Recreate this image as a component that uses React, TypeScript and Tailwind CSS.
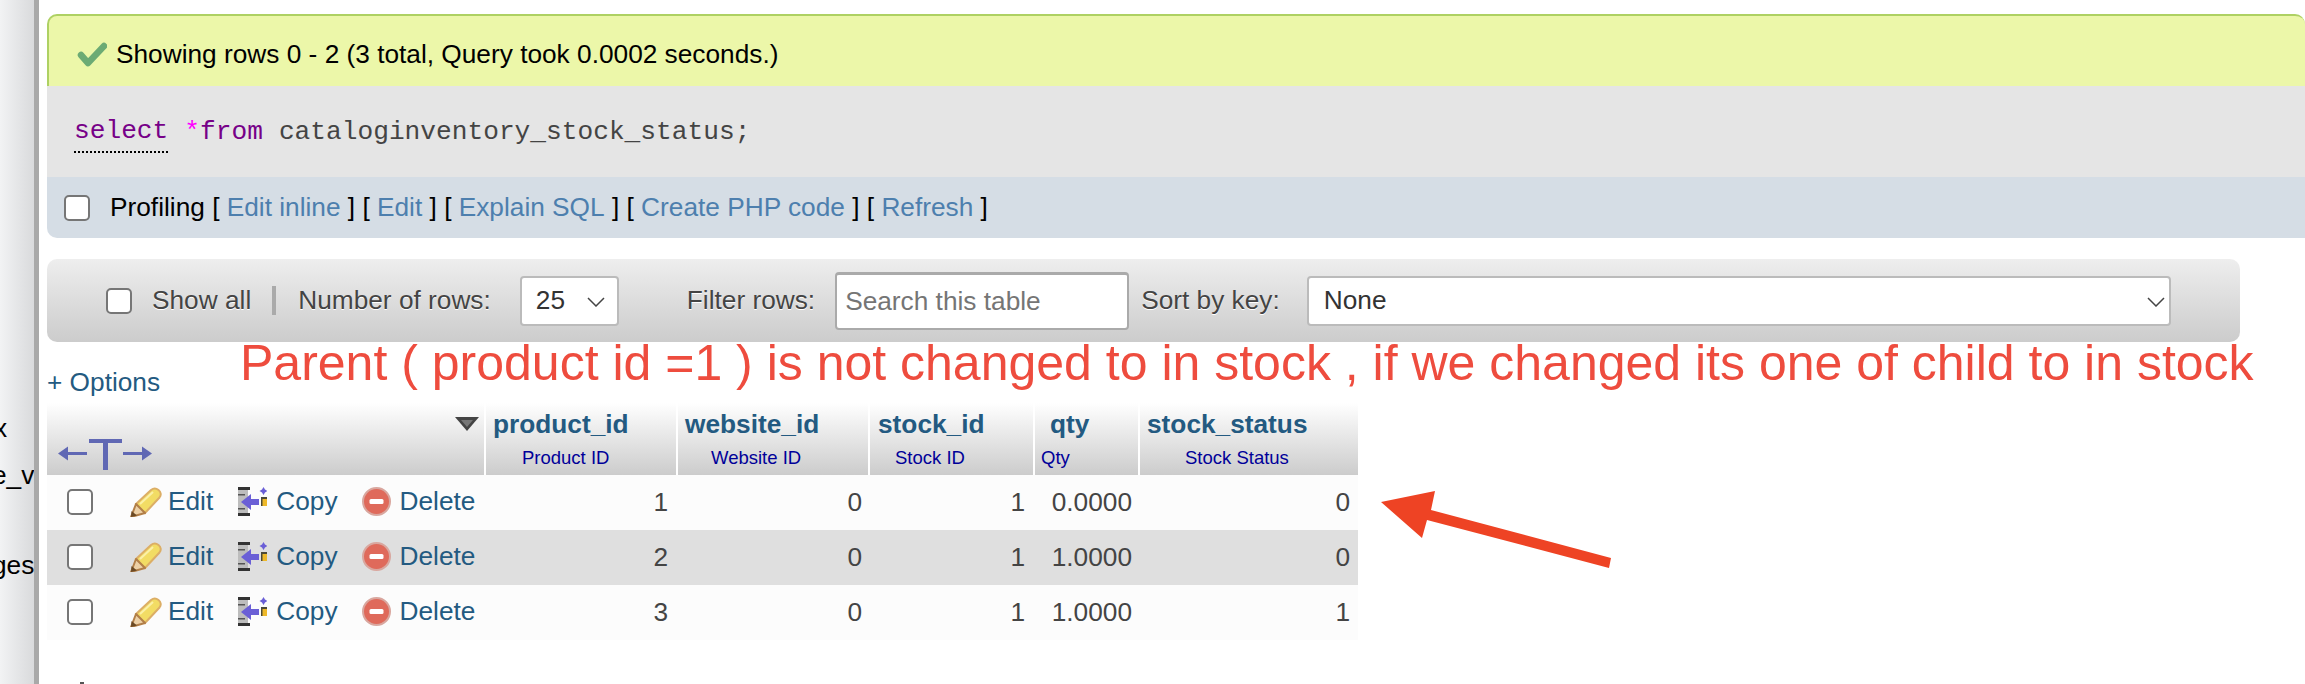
const FONT = "font-['Liberation_Sans',Arial,sans-serif]";

const COLUMNS = [
  { name: 'product_id', label: 'Product ID', width: 192, nameClass: 'pl-[7px]', labelClass: 'pl-[36px]' },
  { name: 'website_id', label: 'Website ID', width: 192, nameClass: 'pl-[7px]', labelClass: 'pl-[33px]' },
  { name: 'stock_id', label: 'Stock ID', width: 165, nameClass: 'pl-[8px]', labelClass: 'pl-[25px]' },
  { name: 'qty', label: 'Qty', width: 105, nameClass: 'pl-[15px]', labelClass: 'pl-[6px]' },
  { name: 'stock_status', label: 'Stock Status', width: 219, nameClass: 'pl-[7px]', labelClass: 'pl-[45px]' },
];

const ROWS = [
  { id: '1', site: '0', stock: '1', qty: '0.0000', status: '0' },
  { id: '2', site: '0', stock: '1', qty: '1.0000', status: '0' },
  { id: '3', site: '0', stock: '1', qty: '1.0000', status: '1' },
];

function Check({ className = '' }: { className?: string }) {
  return (
    <input
      type="checkbox"
      className={`h-[26px] w-[26px] shrink-0 appearance-none rounded-[5px] border-2 border-[#767676] bg-white ${className}`}
    />
  );
}

function Chevron({ className = '' }: { className?: string }) {
  return (
    <svg viewBox="0 0 18 10" className={`pointer-events-none absolute h-[10px] w-[18px] ${className}`}>
      <path d="M1 1l8 8 8-8" fill="none" stroke="#444" strokeWidth="1.5" />
    </svg>
  );
}

function PencilIcon() {
  return (
    <svg viewBox="0 0 32 30" className="h-[30px] w-[32px] shrink-0 blur-[0.4px]">
      <path d="M6 17L21 3c2.500-2 5-2 7.500 0s3 5 1 7.500L15 26z" fill="#f2dc64" stroke="#dcae66" strokeWidth="2" />
      <path d="M10 17L23 5" stroke="#fbf0a8" strokeWidth="2" />
      <path d="M6 17l9 9-14 4z" fill="#ecd0a6" stroke="#b27f48" strokeWidth="2" strokeLinejoin="round" />
      <path d="M1.500 24l-.5 6 6-1.500z" fill="#6b4a25" />
    </svg>
  );
}

function CopyIcon() {
  return (
    <svg viewBox="0 0 30 31" className="h-[31px] w-[30px] shrink-0 blur-[0.4px]">
      <path d="M1 1h10v29H1z" fill="#bdbdbd" />
      <path d="M1 1h12v3H1zM1 27h12v3H1z" fill="#333" />
      <path d="M1 8h7v1.500H1zM1 22h7v1.500H1z" fill="#555" />
      <path d="M4 16l10-8v5h8v6h-8v5z" fill="#6a5fd6" />
      <path d="M24 12h6v8h-6z" fill="#eeb92a" />
      <path d="M24 11h6v2h-6zM24 12h1.500v8H24z" fill="#4d4a38" />
      <path d="M26.500 1l1.500 2.500L30.500 5 28 6.500 26.500 9 25 6.500 22.500 5 25 3.500z" fill="#6a5fd6" />
    </svg>
  );
}

function DeleteIcon() {
  return (
    <svg viewBox="0 0 29 29" className="h-[29px] w-[29px] shrink-0 blur-[0.4px]">
      <circle cx="14.500" cy="14.500" r="13.500" fill="#df6a5b" stroke="#d9a79f" strokeWidth="2" />
      <rect x="7.500" y="12" width="14" height="5" rx="1.500" fill="#fff" />
    </svg>
  );
}

function ResizeIcon() {
  return (
    <svg viewBox="0 0 94 32" className="h-[32px] w-[94px] blur-[0.4px]">
      <g fill="#6068b4">
        <path d="M31 1h33v4H50v27h-5V5H31z" />
        <path d="M0 15.500l10-7v5.500h19v3H10v5.500z" />
        <path d="M94 15.500l-10-7v5.500H65v3h19v5.500z" />
      </g>
    </svg>
  );
}

function ActionLink({ icon, text, className }: { icon: React.ReactNode; text: string; className: string }) {
  return (
    <span className={`flex items-center ${className}`}>
      {icon}
      <a className="text-[#235a81]">{text}</a>
    </span>
  );
}

export default function App() {
  return (
    <div className={`relative flex h-[684px] w-[2305px] overflow-hidden bg-white text-[26.25px] ${FONT}`}>
      {/* left navigation, cut off by the crop */}
      <aside className="h-full w-[39px] shrink-0 overflow-hidden border-r-[5px] border-[#a9a9a9] bg-gradient-to-r from-[#f2f3f4] to-[#d9dadc] pt-[414px] leading-[28px] text-black">
        <div className="-ml-[6px]">x</div>
        <div className="mt-[19px] -ml-[8px] whitespace-nowrap">e_v</div>
        <div className="mt-[62px] -ml-[8px] whitespace-nowrap">ges</div>
      </aside>

      <main className="min-w-0 flex-1 pt-[14px] pl-[8px]">
        <div className="flex h-[72px] items-center rounded-t-[10px] border-t-2 border-l-2 border-[#aed163] bg-[#ecf7a9] pt-[8px] pl-[28px] text-black">
          <svg viewBox="0 0 30 26" className="mr-[9px] -mt-[2px] h-[26px] w-[30px] shrink-0 blur-[0.5px]">
            <path d="M4 14l7 8L27 5" fill="none" stroke="#6cab74" strokeWidth="6.500" strokeLinecap="round" strokeLinejoin="round" />
          </svg>
          <span>Showing rows 0 - 2 (3 total, Query took 0.0002 seconds.)</span>
        </div>

        <div className="flex h-[91px] items-center bg-[#e5e5e5] pt-[2px] pl-[27px] font-['Liberation_Mono',monospace] text-[26.2px] text-[#444]">
          <span className="border-b-2 border-dotted border-black text-[#770088]">select</span>
          <span className="ml-[16px] text-[#f0f]">*</span>
          <span className="text-[#770088]">from</span>
          <span className="ml-[16px]">cataloginventory_stock_status;</span>
        </div>

        <div className="flex h-[61px] items-center rounded-bl-[10px] bg-[#d5dde5] pl-[17px] text-black">
          <Check className="mr-[20px]" />
          <span>Profiling [&nbsp;</span>
          <a className="text-[#4d7fae]">Edit inline</a>
          <span>&nbsp;] [&nbsp;</span>
          <a className="text-[#4d7fae]">Edit</a>
          <span>&nbsp;] [&nbsp;</span>
          <a className="text-[#4d7fae]">Explain SQL</a>
          <span>&nbsp;] [&nbsp;</span>
          <a className="text-[#4d7fae]">Create PHP code</a>
          <span>&nbsp;] [&nbsp;</span>
          <a className="text-[#4d7fae]">Refresh</a>
          <span>&nbsp;]</span>
        </div>

        <div className="mt-[21px] flex h-[83px] w-[2193px] items-center rounded-[10px] bg-gradient-to-b from-[#eeeeee] to-[#cccccc] pl-[59px] text-[#444] [text-shadow:0_1px_0_#fff]">
          <Check className="mr-[20px]" />
          <span>Show all</span>
          <span className="mr-[22px] ml-[21px] h-[29px] w-[4px] bg-[#aaa]" />
          <span>Number of rows:</span>
          <div className="relative mr-[68px] ml-[29px]">
            <select className="h-[50px] w-[99px] appearance-none rounded-[4px] border-2 border-[#bbb] bg-white pl-[14px] text-[#333]">
              <option>25</option>
            </select>
            <Chevron className="top-[21px] right-[14px]" />
          </div>
          <span>Filter rows:</span>
          <input
            placeholder="Search this table"
            className="mr-[12px] ml-[20px] h-[58px] w-[294px] rounded-[4px] border-2 border-t-[3px] border-[#aaa] bg-white pl-[8px] [text-shadow:none] placeholder:text-[#757575]"
          />
          <span>Sort by key:</span>
          <div className="relative ml-[27px]">
            <select className="h-[50px] w-[864px] appearance-none rounded-[4px] border-2 border-[#bbb] bg-white pl-[15px] text-[#333]">
              <option>None</option>
            </select>
            <Chevron className="top-[21px] right-[6px]" />
          </div>
        </div>

        <div className="mt-[26px] h-[35px] leading-[28px] text-[#235a81]">+ Options</div>

        <table className="w-[1311px] table-fixed border-collapse">
          <colgroup>
            <col className="w-[438px]" />
            {COLUMNS.map((c) => (
              <col key={c.name} style={{ width: c.width }} />
            ))}
          </colgroup>
          <thead>
            <tr className="h-[72px]">
              <th className="relative bg-gradient-to-b from-white to-[#cccccc] pl-[11px] text-left align-bottom">
                <svg viewBox="0 0 24 14" className="absolute top-[14px] right-[5px] h-[14px] w-[24px]">
                  <path d="M0 0h24L12 14z" fill="#444" />
                  <path d="M6 3h12l-6 7z" fill="#777" />
                </svg>
                <div className="pb-[5px]">
                  <ResizeIcon />
                </div>
              </th>
              {COLUMNS.map((c) => (
                <th
                  key={c.name}
                  className="border-l-2 border-white bg-gradient-to-b from-white to-[#cccccc] p-0 text-left align-top"
                >
                  <div className={`mt-[6px] font-bold leading-[30px] text-[#235a81] ${c.nameClass}`}>{c.name}</div>
                  <div className={`mt-[8px] text-[18.5px] leading-[22px] font-normal text-[#000099] ${c.labelClass}`}>
                    {c.label}
                  </div>
                </th>
              ))}
            </tr>
          </thead>
          <tbody className="text-[#444]">
            {ROWS.map((r, i) => (
              <tr key={r.id} className={`h-[55px] ${i === 1 ? 'bg-[#dfdfdf]' : 'bg-[#fcfcfc]'}`}>
                <td className="p-0">
                  <div className="-mt-[2px] flex items-center pl-[20px]">
                    <Check className="mr-[37px]" />
                    <ActionLink icon={<PencilIcon />} text="Edit" className="gap-[6px]" />
                    <ActionLink icon={<CopyIcon />} text="Copy" className="ml-[24px] gap-[9px]" />
                    <ActionLink icon={<DeleteIcon />} text="Delete" className="ml-[24px] gap-[9px]" />
                  </div>
                </td>
                <td className="pr-[9px] text-right">{r.id}</td>
                <td className="pr-[7px] text-right">{r.site}</td>
                <td className="pr-[9px] text-right">{r.stock}</td>
                <td className="pr-[7px] text-right">{r.qty}</td>
                <td className="pr-[8px] text-right">{r.status}</td>
              </tr>
            ))}
          </tbody>
        </table>
      </main>

      {/* annotation drawn over the screenshot */}
      <div className="absolute top-[333px] left-[240px] text-[50px] leading-[60px] whitespace-nowrap text-[#ee4c3e]">
        Parent ( product id =1 ) is not changed to in stock , if we changed its one of child to in stock
      </div>
      <svg viewBox="0 0 240 80" className="absolute top-[490px] left-[1380px] h-[80px] w-[240px]">
        <path d="M1 12L55 1 51 20 231 68 229 78 47 30 42 48z" fill="#ee4324" />
      </svg>

      {/* tip of the next block, just visible at the bottom edge */}
      <div className="absolute top-[682px] left-[80px] h-[2px] w-[4px] bg-[#555]" />
    </div>
  );
}
